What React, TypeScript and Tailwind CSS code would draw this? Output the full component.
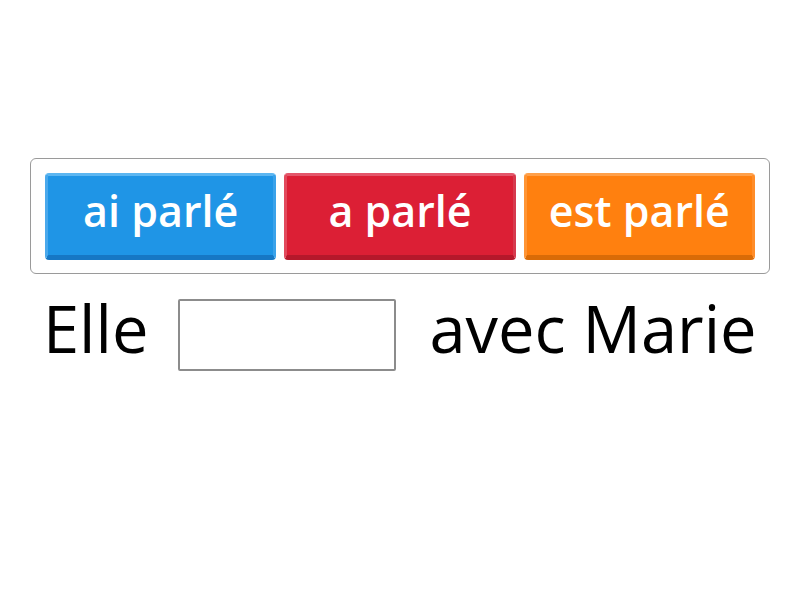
import React from 'react';

const options = [
  {
    label: 'ai parlé',
    cls: 'bg-[#1f95e6] border-t-[#5cb6f1] border-l-[#4aa9ec] border-r-[#3aa2ea] border-b-[#1677c4]',
  },
  {
    label: 'a parlé',
    cls: 'bg-[#dc1f35] border-t-[#e4566a] border-l-[#e24a5d] border-r-[#d63a4e] border-b-[#b5182b]',
  },
  {
    label: 'est parlé',
    cls: 'bg-[#ff800f] border-t-[#ffa04a] border-l-[#ff9535] border-r-[#ff8d2a] border-b-[#d96b07]',
  },
];

export default function App() {
  return (
    <div className="w-[800px] h-[600px] bg-white font-['Open_Sans',sans-serif]">
      <div className="pt-[158px] px-[30px]">
        {/* Options */}
        <div className="w-[740px] h-[116px] border border-[#9a9a9a] rounded-[6px] px-[14px] pt-[14px] flex gap-[8px]">
          {options.map((o) => (
            <div
              key={o.label}
              className={`w-[232px] h-[87px] rounded-[4px] border-t-[3px] border-l-[3px] border-r-[3px] border-b-[5px] flex items-center justify-center text-white font-semibold text-[43px] leading-none pb-[10px] ${o.cls}`}
            >
              {o.label}
            </div>
          ))}
        </div>

        {/* Sentence */}
        <div className="flex items-center mt-[22px] pl-[13px] text-black text-[65px] leading-none">
          <span className="mb-[13px]">Elle</span>
          <div className="ml-[30px] w-[218px] h-[72px] border-2 border-[#8c8c8c] rounded-[2px] bg-white" />
          <span className="ml-[33px] mb-[13px]">avec Marie</span>
        </div>
      </div>
    </div>
  );
}
